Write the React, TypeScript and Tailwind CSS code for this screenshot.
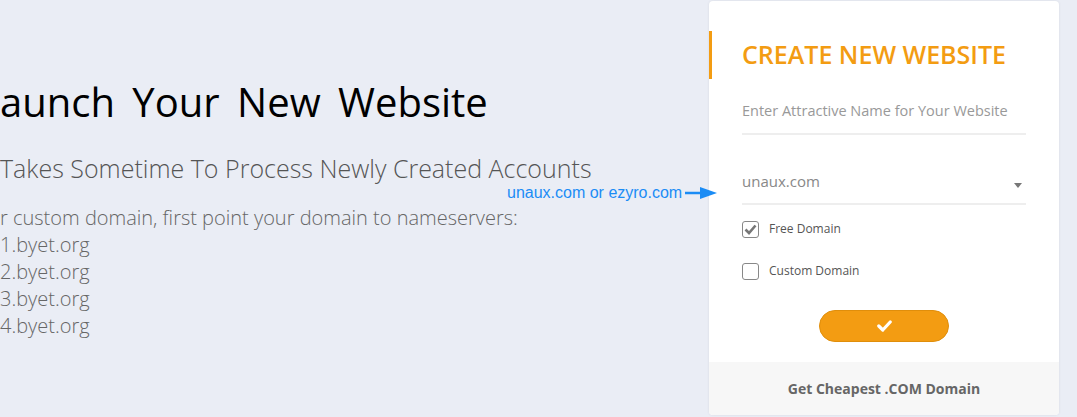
import React from "react";

const font = { fontFamily: '"Open Sans", "Noto Sans", sans-serif' };

export default function App() {
  return (
    <div className="w-[1077px] h-[417px] bg-[#eaedf5] flex overflow-hidden" style={font}>
      <div className="flex-1 relative">
        <div className="pt-[74px]">
          <h1 className="text-[40px] leading-[56px] text-black font-normal [word-spacing:7px] whitespace-nowrap">
            aunch Your New Website
          </h1>
          <p className="mt-[22px] text-[25px] leading-[32px] text-[#555] font-light whitespace-nowrap">
            Takes Sometime To Process Newly Created Accounts
          </p>
          <div className="mt-[21px] text-[20px] leading-[27px] text-[#666] font-light whitespace-nowrap">
            <div className="leading-[26px]">r custom domain, first point your domain to nameservers:</div>
            <div>1.byet.org</div>
            <div>2.byet.org</div>
            <div>3.byet.org</div>
            <div>4.byet.org</div>
          </div>
        </div>
        <div className="absolute left-[507px] top-[181px] flex items-center">
          <span className="text-[16px] text-[#1b8cf5] whitespace-nowrap" style={{ fontFamily: '"Liberation Sans", Arial, sans-serif' }}>
            unaux.com or ezyro.com
          </span>
          <svg width="36" height="14" viewBox="0 0 36 14" className="ml-[2px]">
            <line x1="1" y1="7" x2="20" y2="7" stroke="#1b8cf5" strokeWidth="2.5" />
            <polygon points="16,1 33,7 16,13" fill="#1b8cf5" />
          </svg>
        </div>
      </div>
      <div className="w-[350px] mr-[18px] mt-[1px] h-[414px] bg-white rounded-[4px] shadow-[0_0_3px_rgba(0,0,0,0.08)] flex flex-col overflow-hidden">
        <div className="flex-1">
          <div className="mt-[30px] border-l-[3px] border-[#f39c12] h-[48px] flex items-center pl-[30px]">
            <h2 className="text-[25px] font-semibold text-[#f39c12] whitespace-nowrap">CREATE NEW WEBSITE</h2>
          </div>
          <div className="px-[33px]">
            <div className="mt-[20px] border-b-2 border-[#eeeeee] h-[36px] flex items-start">
              <span className="text-[14.5px] leading-[24px] text-[#999]">Enter Attractive Name for Your Website</span>
            </div>
            <div className="mt-[34px] border-b-2 border-[#eeeeee] h-[36px] flex items-start justify-between">
              <span className="text-[15px] leading-[24px] text-[#888]">unaux.com</span>
              <svg width="8" height="5" viewBox="0 0 8 5" className="mt-[14px] mr-[4px]">
                <polygon points="0,0 8,0 4,5" fill="#777" />
              </svg>
            </div>
            <label className="mt-[15px] flex items-center gap-[10px]">
              <span className="w-[17px] h-[17px] border border-[#888] rounded-[3px] flex items-center justify-center">
                <svg width="13" height="11" viewBox="0 0 13 11">
                  <path d="M1.5 5.5 L5 9 L11.5 1.5" stroke="#777" strokeWidth="2.6" fill="none" />
                </svg>
              </span>
              <span className="text-[12px] text-[#555]">Free Domain</span>
            </label>
            <label className="mt-[24px] flex items-center gap-[10px]">
              <span className="w-[17px] h-[17px] border border-[#888] rounded-[3px]" />
              <span className="text-[12px] text-[#555]">Custom Domain</span>
            </label>
            <div className="mt-[30px] flex justify-center">
              <button className="w-[130px] h-[32px] rounded-full bg-[#f39c12] border border-[#e08e0b] flex items-center justify-center">
                <svg width="15" height="12" viewBox="0 0 15 12">
                  <path d="M1.8 6 L5.8 10 L13.2 2" stroke="#fff" strokeWidth="3.2" fill="none" strokeLinecap="round" strokeLinejoin="round" />
                </svg>
              </button>
            </div>
          </div>
        </div>
        <div className="h-[53px] bg-[#f7f7f7] flex items-center justify-center">
          <span className="text-[14px] font-bold text-[#666]">Get Cheapest .COM Domain</span>
        </div>
      </div>
    </div>
  );
}
